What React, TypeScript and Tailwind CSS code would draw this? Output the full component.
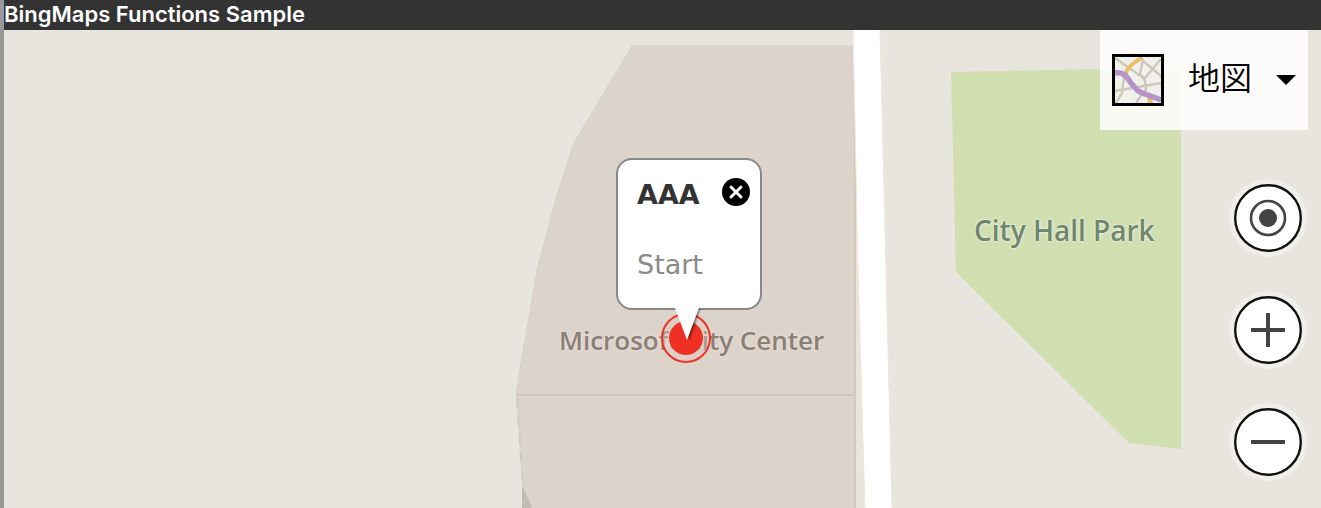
import { useState } from "react";

function MapTiles() {
  return (
    <svg
      className="absolute inset-0 w-full h-full"
      viewBox="0 0 1317 478"
      preserveAspectRatio="xMinYMin slice"
      aria-hidden="true"
    >
      <rect width="1317" height="478" fill="#e8e5de" />

      {/* Office block */}
      <polygon points="628,16 852,16 852,478 518,478 518,455 512,363 533,240 552,168 570,113" fill="#dcd3ca" />
      <polyline points="512,363 533,240 552,168 570,113 628,16 852,16" fill="none" stroke="#d8d0c7" strokeWidth="1" />
      <path d="M512 365H852" stroke="#d1c6bc" strokeWidth="2" />
      <path d="M851 20V478" stroke="#d1c8be" strokeWidth="2" />
      <path d="M513 368L519 456" stroke="#cfcbc2" strokeWidth="2" strokeDasharray="10 8" />
      <polygon points="518,455 528,478 518,478" fill="#c1bcb1" />

      {/* Road */}
      <polygon points="849,-2 876,-2 882,240 888,480 861,480 854,240" fill="#fff" stroke="#efe6d6" strokeWidth="1" />

      {/* Park */}
      <polygon points="947,42 1096,39 1177,38 1177,419 1125,413 952,242" fill="#d1deaf" />
    </svg>
  );
}

function RoadThumb() {
  return (
    <svg className="w-[52px] h-[52px] border-[3px] border-black" viewBox="0 0 46 46" aria-hidden="true">
      <rect width="46" height="46" fill="#f0f1ec" />
      <g fill="none" stroke="#cec7b9" strokeWidth="2.4">
        <path d="M0 1L24 18L30 21L46 2" />
        <path d="M28 2L25 17L30 24L31 32L21 46" />
        <path d="M27 3L46 19" />
        <path d="M0 34L46 26" />
        <path d="M9 20L7 36L1 46" />
      </g>
      <path d="M10 19C12 11 15 9 19 6L27 0" fill="none" stroke="#e9bf6b" strokeWidth="4" />
      <path d="M35 39V46" stroke="#e9bf6b" strokeWidth="5" />
      <path d="M0 16C8 15 11 18 16 26C21 32 24 36 30 37L46 43" fill="none" stroke="#b593c6" strokeWidth="5.5" />
    </svg>
  );
}

function MapTypeSelector() {
  return (
    <button type="button" className="h-[100px] w-[208px] pl-3 pr-3 flex items-center bg-white/85 text-black">
      <RoadThumb />
      <span className="ml-6 pb-2 flex-1 text-left text-[32px] leading-[40px] font-[350] font-['Noto_Sans_CJK_JP',sans-serif]">
        地図
      </span>
      <svg className="w-5 h-[10px]" viewBox="0 0 20 10" aria-hidden="true">
        <polygon points="0,0 20,0 10,10" />
      </svg>
    </button>
  );
}

type MapButtonProps = {
  label: string;
  onClick?: () => void;
  children: React.ReactNode;
};

function MapButton({ label, onClick, children }: MapButtonProps) {
  return (
    <button
      type="button"
      aria-label={label}
      onClick={onClick}
      className="w-[78px] h-[78px] p-[5px] rounded-full bg-white/35"
    >
      <svg className="w-[68px] h-[68px]" viewBox="0 0 68 68" fill="none" stroke="#444" strokeWidth="4">
        <circle cx="34" cy="34" r="32.8" fill="#fff" stroke="#111" strokeWidth="2.4" />
        {children}
      </svg>
    </button>
  );
}

function Infobox({ onClose }: { onClose: () => void }) {
  return (
    <div className="absolute left-[612px] top-32 w-[146px] h-[152px] pl-[19px] pr-[10px] pt-[18px] bg-white border-2 border-[#888] rounded-2xl font-['DejaVu_Sans',Verdana,sans-serif] text-[27px] leading-[34px]">
      <div className="flex items-start justify-between">
        <h2 className="font-bold text-[#333]">AAA</h2>
        <button type="button" aria-label="Close" onClick={onClose}>
          <svg className="w-7 h-7" viewBox="0 0 28 28">
            <circle cx="14" cy="14" r="14" />
            <path d="M9 9L19 19M19 9L9 19" stroke="#fff" strokeWidth="3" strokeLinecap="round" />
          </svg>
        </button>
      </div>
      <p className="mt-9 text-[#8a8a8a]">Start</p>
      <svg className="absolute left-[54px] top-[148px] w-8 h-9" viewBox="0 0 32 36" aria-hidden="true">
        <polygon points="7,0 28,0 17,32" className="fill-black/60 blur-[1px]" />
        <polygon points="3,0 27,0 15,32" fill="#fff" />
      </svg>
    </div>
  );
}

export default function App() {
  const [infoOpen, setInfoOpen] = useState(true);

  return (
    <div className="h-screen flex flex-col border-l-4 border-[#999] overflow-hidden">
      <header className="bg-[#333] text-white">
        <h1 className="text-[22px] leading-[28px] pb-0.5 font-semibold font-['Inter',sans-serif]">BingMaps Functions Sample</h1>
      </header>

      <main className="relative flex-1 overflow-hidden bg-[#e8e5de]">
        <MapTiles />

        <span className="absolute left-[555px] top-[292px] text-[26px] leading-[36px] font-semibold text-[#8c7f76] font-['Open_Sans',sans-serif] whitespace-nowrap [text-shadow:0_0_3px_#eee9e3]">
          Microsoft City Center
        </span>
        <span className="absolute left-[970px] top-[182px] text-[28px] leading-[36px] font-semibold text-[#6f876f] font-['Open_Sans',sans-serif] whitespace-nowrap [text-shadow:0_0_3px_#fff]">
          City Hall Park
        </span>

        {/* Pushpin */}
        <svg className="absolute left-[657px] top-[283px] w-[50px] h-[50px]" viewBox="0 0 50 50" aria-hidden="true">
          <circle cx="25" cy="25" r="24" fill="#e0c9c0" fillOpacity="0.4" stroke="#ee3124" strokeWidth="2" />
          <circle cx="25" cy="25" r="17" fill="#ee3124" />
        </svg>

        {infoOpen && <Infobox onClose={() => setInfoOpen(false)} />}

        {/* Map controls */}
        <div className="absolute top-0 right-[13px] flex flex-col items-end">
          <MapTypeSelector />
          <div className="mt-[49px] mr-px flex flex-col gap-[34px]">
            <MapButton label="Locate me">
              <circle cx="34" cy="34" r="17" strokeWidth="2.6" />
              <circle cx="34" cy="34" r="9" fill="#444" stroke="none" />
            </MapButton>
            <MapButton label="Zoom in">
              <path d="M17 34H51M34 17V51" />
            </MapButton>
            <MapButton label="Zoom out">
              <path d="M17 34H51" />
            </MapButton>
          </div>
        </div>
      </main>
    </div>
  );
}
